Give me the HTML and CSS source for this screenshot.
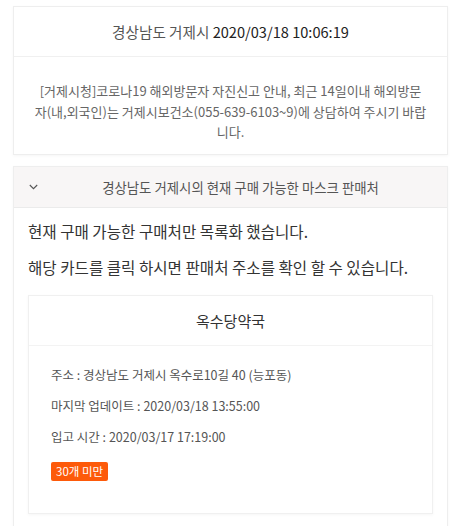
FILE: index.html
```html
<!DOCTYPE html>
<html>
<head>
  <meta charset="utf-8">
  <title>마스크 판매처</title>
  <link rel="stylesheet" href="styles.css">
</head>
<body>
  <div class="page">

    <div class="card">
      <div class="card-header">
        <span class="region">경상남도 거제시</span> <span class="stamp">2020/03/18 10:06:19</span>
      </div>
      <div class="card-body notice">
        [거제시청]코로나19 해외방문자 자진신고 안내, 최근 14일이내 해외방문자(내,외국인)는 거제시보건소(055-639-6103~9)에 상담하여 주시기 바랍니다.
      </div>
    </div>

    <div class="card">
      <div class="card-header accordion">
        <span class="chevron">
          <svg width="9" height="6" viewBox="0 0 9 6"><path d="M0.8 1 L4.5 4.7 L8.2 1" fill="none" stroke="#555" stroke-width="1.1"/></svg>
        </span>
        <span class="accordion-title">경상남도 거제시의 현재 구매 가능한 마스크 판매처</span>
      </div>
      <div class="card-body list">
        <p class="intro">현재 구매 가능한 구매처만 목록화 했습니다.</p>
        <p class="intro">해당 카드를 클릭 하시면 판매처 주소를 확인 할 수 있습니다.</p>

        <div class="store">
          <div class="store-name">옥수당약국</div>
          <div class="store-body">
            <p>주소 : 경상남도 거제시 옥수로10길 40 (능포동)</p>
            <p>마지막 업데이트 : 2020/03/18 13:55:00</p>
            <p>입고 시간 : 2020/03/17 17:19:00</p>
            <span class="badge">30개 미만</span>
          </div>
        </div>
      </div>
    </div>

  </div>
</body>
</html>
```

FILE: styles.css
```css
body {
  margin: 0;
  background-color: #fff;
  color: #333;
  font-family: "Noto Sans CJK KR", "Noto Sans", sans-serif;
}

.page {
  width: 435px;
  padding: 6px 0 0 13px;
}

.card {
  border: 1px solid #eeeeee;
  box-shadow: 0 1px 3px rgba(0, 0, 0, 0.04);
  background-color: #fff;
  margin-bottom: 11px;
}

.card-header {
  height: 49px;
  line-height: 49px;
  text-align: center;
  font-size: 14.6px;
  border-bottom: 1px solid #f0f0f0;
}

.region {
  color: #555;
}

.stamp {
  color: #222;
}

.notice {
  padding: 24px 20.25px 11px;
  text-align: center;
  font-size: 13px;
  line-height: 20.5px;
  color: #666;
}

.accordion {
  display: flex;
  align-items: center;
  height: 40px;
  line-height: 40px;
  padding: 0 17px;
  background-color: #f8f6f6;
  border-bottom: 1px solid #ebebeb;
  font-size: 13.4px;
  color: #555;
}

.chevron {
  width: 20px;
  display: flex;
  align-items: center;
  margin-left: -2px;
}

.accordion-title {
  flex: 1;
  text-align: center;
  margin-right: -2px;
}

.list {
  padding: 13px 14px 20px;
}

.intro {
  margin: 0 0 15px;
  font-size: 15.6px;
  line-height: 21px;
  color: #333;
}

.store {
  margin-top: 17px;
  border: 1px solid #f0f0f0;
  box-shadow: 0 1px 3px rgba(0, 0, 0, 0.04);
}

.store-name {
  height: 49px;
  line-height: 49px;
  text-align: center;
  font-size: 15px;
  color: #333;
  border-bottom: 1px solid #f3f3f3;
}

.store-body {
  padding: 18px 22px 32px;
}

.store-body p {
  margin: 0 0 10px;
  font-size: 12.5px;
  line-height: 21px;
  color: #555;
}

.badge {
  display: inline-block;
  margin-top: 1px;
  padding: 0 5px;
  height: 19px;
  line-height: 19px;
  font-size: 11.5px;
  color: #fff;
  background-color: #fd5a0a;
  border-radius: 2px;
}
```
